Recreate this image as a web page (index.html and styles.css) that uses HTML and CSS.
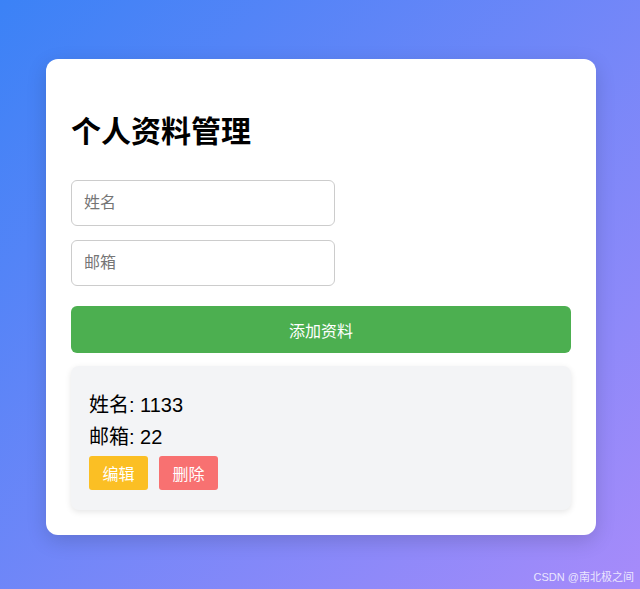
FILE: index.html
```html
<!DOCTYPE html>
<html lang="zh-CN">
<head>
    <meta charset="UTF-8">
    <meta name="viewport" content="width=device-width, initial-scale=1.0">
    <title>个人资料管理</title>
    <link rel="stylesheet" href="styles.css">
</head>
<body>
    <div class="container">
        <h1>个人资料管理</h1>

        <!-- Add profile form -->
        <form class="profile-form">
            <input type="text" placeholder="姓名">
            <input type="text" placeholder="邮箱">
            <button type="button" class="add-btn">添加资料</button>
        </form>

        <!-- Profile list -->
        <div class="profile-list">
            <div class="profile-card">
                <p>姓名: 1133</p>
                <p>邮箱: 22</p>
                <div class="actions">
                    <button type="button" class="edit-btn">编辑</button>
                    <button type="button" class="delete-btn">删除</button>
                </div>
            </div>
        </div>
    </div>

    <div class="watermark">CSDN @南北极之间</div>
</body>
</html>
```

FILE: styles.css
```css
:root {
    --green: #4caf50;
    --amber: #fbbf24;
    --red: #f87171;
    --card-gray: #f3f4f6;
}

body {
    margin: 0;
    padding-left: 2px;
    min-height: 100vh;
    background: linear-gradient(135deg, #3b82f6, #a78bfa);
    font-family: "Liberation Sans", "Noto Sans CJK SC", sans-serif;
    color: #000;
}

.container {
    width: 500px;
    margin: 59px auto 0;
    padding: 25px;
    background: #fff;
    border-radius: 12px;
    box-shadow: 0 6px 20px rgba(0, 0, 0, 0.15);
}

h1 {
    font-size: 30px;
    line-height: 40px;
    font-weight: 700;
    margin: 28px 0 28px;
    color: #000;
}

.profile-form {
    display: flex;
    flex-direction: column;
    align-items: flex-start;
    gap: 14px;
}

.profile-form input {
    box-sizing: border-box;
    width: 264px;
    height: 46px;
    padding: 0 12px;
    border: 1px solid #ccc;
    border-radius: 6px;
    font-family: inherit;
    font-size: 16px;
    outline: none;
}

.profile-form input::placeholder {
    color: #757575;
}

.add-btn {
    width: 100%;
    height: 47px;
    margin-top: 6px;
    background: var(--green);
    color: #fff;
    border: none;
    border-radius: 6px;
    font-family: inherit;
    font-size: 16px;
    cursor: pointer;
}

.profile-list {
    margin-top: 13px;
}

.profile-card {
    background: var(--card-gray);
    border-radius: 8px;
    padding: 23px 18px 20px;
    box-shadow: 0 2px 6px rgba(0, 0, 0, 0.1);
}

.profile-card p {
    margin: 0;
    font-size: 20px;
    line-height: 32px;
}

.actions {
    display: flex;
    gap: 11px;
    margin-top: 3px;
}

.actions button {
    width: 59px;
    height: 34px;
    padding: 0;
    border: none;
    border-radius: 3px;
    color: #fff;
    font-family: inherit;
    font-size: 16px;
    cursor: pointer;
}

.edit-btn {
    background: var(--amber);
}

.delete-btn {
    background: var(--red);
}

.watermark {
    position: absolute;
    right: 6px;
    bottom: 5px;
    font-size: 11px;
    color: rgba(255, 255, 255, 0.8);
}
```
